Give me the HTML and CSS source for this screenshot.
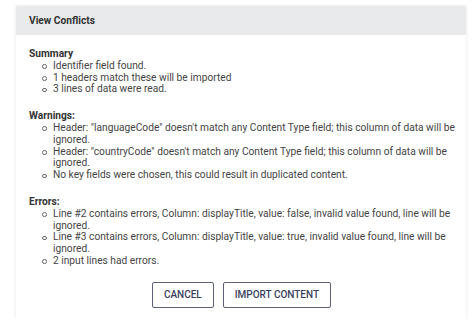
FILE: index.html
```html
<!DOCTYPE html>
<html lang="en">
<head>
  <meta charset="UTF-8">
  <title>View Conflicts</title>
  <link rel="stylesheet" href="styles.css">
</head>
<body>

  <div class="dialog">
    <div class="dialog-header">View Conflicts</div>

    <div class="dialog-body">
      <div class="section">
        <h4>Summary</h4>
        <ul>
          <li>Identifier field found.</li>
          <li>1 headers match these will be imported</li>
          <li>3 lines of data were read.</li>
        </ul>
      </div>

      <div class="section">
        <h4>Warnings:</h4>
        <ul>
          <li>Header: "languageCode" doesn't match any Content Type field; this column of data will be ignored.</li>
          <li>Header: "countryCode" doesn't match any Content Type field; this column of data will be ignored.</li>
          <li>No key fields were chosen, this could result in duplicated content.</li>
        </ul>
      </div>

      <div class="section">
        <h4>Errors:</h4>
        <ul>
          <li>Line #2 contains errors, Column: displayTitle, value: false, invalid value found, line will be ignored.</li>
          <li>Line #3 contains errors, Column: displayTitle, value: true, invalid value found, line will be ignored.</li>
          <li>2 input lines had errors.</li>
        </ul>
      </div>

      <div class="actions">
        <button class="btn">Cancel</button>
        <button class="btn">Import Content</button>
      </div>
    </div>
  </div>

</body>
</html>
```

FILE: styles.css
```css
body {
  font-family: Roboto, "Liberation Sans", sans-serif;
  font-size: 10.2px;
  line-height: 11.8px;
  color: #444;
  background: #fff;
  margin: 0;
  padding: 6px 0 0 16px;
}
.dialog {
  width: 450px;
  background: white;
  box-shadow: 0 0 3px rgba(0, 0, 0, 0.12);
}
.dialog-header {
  height: 29px;
  display: flex;
  align-items: center;
  padding: 0 13px;
  background-color: #e9eaec;
  color: #333;
  font-weight: bold;
}
.dialog-body {
  padding: 13px 8px 11px 13px;
}
.section {
  margin-bottom: 15px;
}
h4 {
  margin: 0;
  font-size: 10.2px;
  color: #333;
}
ul {
  margin: 0;
  padding-left: 24px;
  list-style: none;
}
li {
  position: relative;
}
li::before {
  content: "";
  position: absolute;
  left: -11px;
  top: 4.5px;
  width: 2.5px;
  height: 2.5px;
  border: 1px solid #666;
  border-radius: 50%;
}
.actions {
  display: flex;
  justify-content: center;
  gap: 9px;
  padding-right: 4px;
  margin-top: 1px;
}
.btn {
  height: 26px;
  padding: 0 11px;
  background: white;
  border: 1.5px solid #5d6175;
  border-radius: 2px;
  color: #3a3f5c;
  font-family: Roboto, "Liberation Sans", sans-serif;
  font-size: 10px;
  font-weight: 500;
  text-transform: uppercase;
  cursor: pointer;
}
```
